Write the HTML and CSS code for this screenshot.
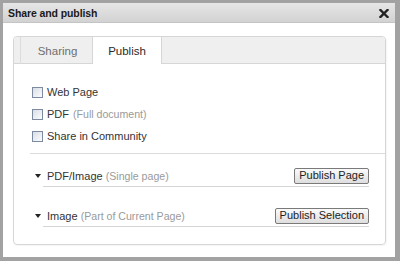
FILE: index.html
```html
<!DOCTYPE html>
<html>
<head>
<meta charset="utf-8">
<link rel="stylesheet" href="styles.css">
</head>
<body>
<div class="window">
  <div class="titlebar">
    <span class="title">Share and publish</span>
    <svg class="close" width="10" height="9" viewBox="0 0 10 9"><path d="M1.5 1 L8.5 8 M8.5 1 L1.5 8" stroke="#222" stroke-width="2.4" stroke-linecap="square"/></svg>
  </div>
  <div class="content">
    <div class="panel">
      <div class="tabbar">
        <div class="tab">Sharing</div>
        <div class="tab active">Publish</div>
      </div>
      <div class="panel-body">
        <div class="checks">
          <label class="check"><span class="box"></span>Web Page</label>
          <label class="check"><span class="box"></span>PDF <span class="muted">(Full document)</span></label>
          <label class="check"><span class="box"></span>Share in Community</label>
        </div>
        <div class="sep"></div>
        <div class="section first">
          <span class="tri"></span>
          <div class="head">
            <span>PDF/Image <span class="muted">(Single page)</span></span>
            <button class="btn">Publish Page</button>
          </div>
        </div>
        <div class="section second">
          <span class="tri"></span>
          <div class="head">
            <span>Image <span class="muted">(Part of Current Page)</span></span>
            <button class="btn">Publish Selection</button>
          </div>
        </div>
      </div>
    </div>
  </div>
</div>
</body>
</html>
```

FILE: styles.css
```css
* { box-sizing: border-box; }
html, body { margin: 0; padding: 0; }
body {
  background: #a2a2a2;
  width: 400px;
  height: 261px;
  overflow: hidden;
  font-family: "Liberation Sans", Arial, sans-serif;
  font-size: 11px;
  color: #333;
}
.window {
  margin: 3px 5px 4px 3px;
  width: 392px;
  height: 254px;
  background: #fff;
  display: flex;
  flex-direction: column;
}
.titlebar {
  height: 20px;
  background: linear-gradient(#e6e6e6, #d2d2d2);
  border-bottom: 1px solid #c4c4c4;
  display: flex;
  align-items: center;
  justify-content: space-between;
  padding: 0 6px 0 5px;
}
.title {
  font-weight: bold;
  font-size: 10.5px;
  color: #1a1a1a;
  letter-spacing: -0.1px;
}
.close { display: block; margin-top: 1px; }
.content {
  flex: 1;
  padding: 13px 9px 12px 10px;
  display: flex;
}
.panel {
  flex: 1;
  border: 1px solid #d6d6d6;
  border-radius: 4px;
  display: flex;
  flex-direction: column;
  box-shadow: 1px 1px 1px rgba(0,0,0,0.04);
}
.tabbar {
  height: 27px;
  background: #efefef;
  border-bottom: 1px solid #d6d6d6;
  border-radius: 4px 4px 0 0;
  display: flex;
  padding-left: 6px;
}
.tab {
  width: 72px;
  height: 27px;
  border-left: 1px solid #dcdcdc;
  display: flex;
  align-items: center;
  justify-content: center;
  font-size: 11.5px;
  color: #6e6e6e;
  padding-top: 1px;
  padding-left: 2px;
}
.tab.active {
  width: 70px;
  background: #fff;
  color: #2a2a2a;
  border-right: 1px solid #d6d6d6;
  border-left: 1px solid #d6d6d6;
  padding-left: 0;
}
.panel-body {
  flex: 1;
  padding-top: 17px;
}
.checks {
  display: flex;
  flex-direction: column;
  padding-left: 18px;
}
.check {
  height: 22px;
  display: flex;
  align-items: center;
  color: #333;
}
.box {
  width: 11px;
  height: 11px;
  border: 1px solid #7d8aa0;
  background: linear-gradient(135deg, #d9dee6, #fbfcfd);
  margin-right: 4px;
}
.check .muted { margin-left: 4px; }
.muted { color: #9a9a9a; font-size: 10.6px; }
.sep {
  margin: 6px 0 0 16px;
  border-top: 1px solid #dcdcdc;
}
.section {
  display: flex;
  align-items: center;
  margin-left: 21px;
  margin-right: 16px;
}
.section.first { margin-top: 12px; }
.section.second { margin-top: 19px; }
.tri {
  width: 0;
  height: 0;
  border-left: 3px solid transparent;
  border-right: 3px solid transparent;
  border-top: 4px solid #222;
  margin-right: 2px;
  margin-top: -2px;
}
.head {
  flex: 1;
  height: 21px;
  border-bottom: 1px solid #d6d6d6;
  display: flex;
  align-items: center;
  justify-content: space-between;
  padding-left: 4px;
  padding-bottom: 1px;
}
.btn {
  font-family: "Liberation Sans", Arial, sans-serif;
  font-size: 11px;
  color: #222;
  height: 16px;
  padding: 0 4px;
  border: 1px solid #7a7a7a;
  border-radius: 2px;
  background: linear-gradient(#fafafa, #dedede);
  line-height: 13px;
}
```
